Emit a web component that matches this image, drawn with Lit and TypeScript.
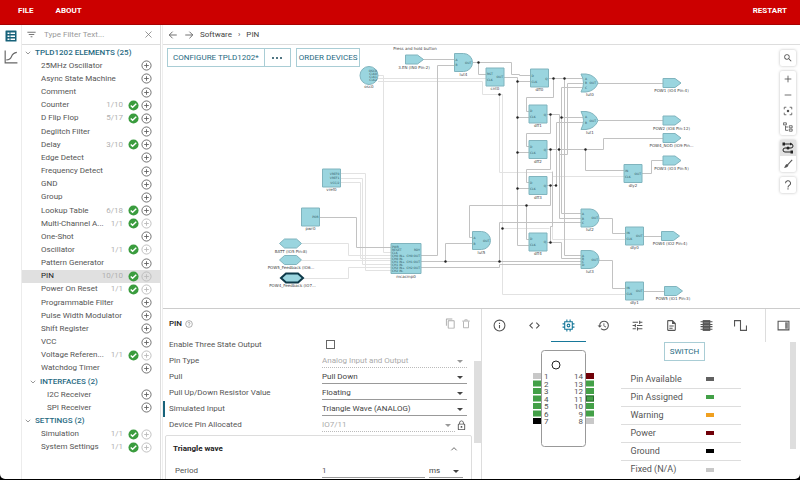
import { LitElement, html, svg, css, nothing } from "lit";
import { customElement, state } from "lit/decorators.js";
import { classMap } from "lit/directives/class-map.js";

const fill = (d: string) => svg`<path d=${d} fill="currentColor"/>`;
const line = (d: string, w = 2) =>
  svg`<path d=${d} fill="none" stroke="currentColor" stroke-width=${w}/>`;

const ICONS: Record<string, unknown> = {
  filter: fill("M10 18h4v-2h-4v2zM3 6v2h18V6H3zm3 7h12v-2H6v2z"),
  close: line("M4 4L20 20M20 4L4 20"),
  back: line("M21 12H3M11 4L3 12L11 20"),
  forward: line("M3 12H21M13 4L21 12L13 20"),
  down: line("M3 7L12 16L21 7", 3),
  up: line("M4 16L12 8L20 16", 2),
  help: svg`<circle cx="12" cy="12" r="10" fill="none" stroke="currentColor" stroke-width="2"/>${line("M9 10a3 3 0 1 1 4 3q-1 .5-1 2M12 16v2")}`,
  list: svg`<rect x="1" y="1" width="22" height="22" rx="1" fill="#17627a"/><path d="M5 5h4v3H5zM5 11h4v3H5zM5 17h4v3H5zM11 5h9v3h-9zM11 11h9v3h-9zM11 17h9v3h-9z" fill="#fff"/>`,
  chart: line("M2 1V22H23M4 17Q11 17 13 11T22 4"),
  add: svg`<circle cx="12" cy="12" r="10" fill="none" stroke="currentColor" stroke-width="2"/>${line("M12 7V17M7 12H17")}`,
  check: svg`<circle cx="12" cy="12" r="11" fill="#3a9c3e"/><path d="M6 12L10 16L18 8" fill="none" stroke="#fff" stroke-width="3"/>`,
  search: fill("M15.5 14h-.79l-.28-.27A6.47 6.47 0 0 0 16 9.5 6.5 6.5 0 1 0 9.5 16c1.61 0 3.09-.59 4.23-1.57l.27.28v.79l5 4.99L20.49 19l-4.99-5zm-6 0C7.01 14 5 11.99 5 9.5S7.01 5 9.5 5 14 7.01 14 9.5 11.99 14 9.5 14z"),
  plus: line("M4 12H20M12 4V20"),
  minus: line("M4 12H20"),
  fit: svg`${line("M3 8V3H8M16 3H21V8M21 16V21H16M8 21H3V16")}<circle cx="12" cy="12" r="3" fill="currentColor"/>`,
  tree: line("M1 2H8V7H1zM15 9H22V14H15zM15 17H22V22H15zM6 9V20H12M6 12H12"),
  route: svg`${line("M6 4H18a4 4 0 0 1 0 8H6a4 4 0 0 0 0 8H18", 2)}<path d="M16 1l5 3-5 3zM17 17h5v6h-5zM1 1h5v6H1z" fill="currentColor"/><circle cx="12" cy="12" r="3" fill="currentColor"/>`,
  brush: svg`${line("M22 2L11 14", 2.5)}<path d="M10 12l3 3c-1 5-6 6-11 6 4-2 2-8 8-9z" fill="currentColor"/>`,
  question: line("M6 8a6 6 0 1 1 9 5q-3 2-3 5M12 20v3", 2.5),
  copy: fill("M16 1H4c-1.1 0-2 .9-2 2v14h2V3h12V1zm3 4H8c-1.1 0-2 .9-2 2v14c0 1.1.9 2 2 2h11c1.1 0 2-.9 2-2V7c0-1.1-.9-2-2-2zm0 16H8V7h11v14z"),
  trash: line("M3 5H21M9 4V2H15V4M6 6V21H18V6"),
  lock: fill("M12 17c1.1 0 2-.9 2-2s-.9-2-2-2-2 .9-2 2 .9 2 2 2zm6-9h-1V6c0-2.76-2.24-5-5-5S7 3.24 7 6v2H6c-1.1 0-2 .9-2 2v10c0 1.1.9 2 2 2h12c1.1 0 2-.9 2-2V10c0-1.1-.9-2-2-2zM8.9 6c0-1.71 1.39-3.1 3.1-3.1s3.1 1.39 3.1 3.1v2H8.9V6zM18 20H6V10h12v10z"),
  info: svg`<circle cx="12" cy="12" r="10" fill="none" stroke="currentColor" stroke-width="2"/>${line("M12 7V9M12 11V17")}`,
  code: fill("M9.4 16.6L4.8 12l4.6-4.6L8 6l-6 6 6 6 1.4-1.4zm5.2 0l4.6-4.6-4.6-4.6L16 6l6 6-6 6-1.4-1.4z"),
  chip: svg`<circle cx="12" cy="12" r="2.5" fill="none" stroke="currentColor" stroke-width="2"/>${line("M5 5H19V19H5zM9 1V5M15 1V5M9 19V23M15 19V23M1 9H5M1 15H5M19 9H23M19 15H23")}`,
  history: fill("M13 3a9 9 0 0 0-9 9H1l3.89 3.89.07.14L9 12H6c0-3.87 3.13-7 7-7s7 3.13 7 7-3.13 7-7 7c-1.93 0-3.68-.79-4.94-2.06l-1.42 1.42A8.954 8.954 0 0 0 13 21a9 9 0 0 0 0-18zm-1 5v5l4.28 2.54.72-1.21-3.5-2.08V8H12z"),
  tune: fill("M3 17v2h6v-2H3zM3 5v2h10V5H3zm10 16v-2h8v-2h-8v-2h-2v6h2zM7 9v2H3v2h4v2h2V9H7zm14 4v-2H11v2h10zm-6-4h2V7h4V5h-4V3h-2v6z"),
  doc: fill("M8 16h6v2H8zm0-4h8v2H8zm6-10H6c-1.1 0-2 .9-2 2v16c0 1.1.89 2 1.99 2H18c1.1 0 2-.9 2-2V8l-6-6zm4 18H6V4h7v5h5v11z"),
  stack: svg`<path d="M5 2h14v20H5z" fill="currentColor"/>${line("M1 5H23M1 10H23M1 14H23M1 19H23")}<path d="M7 7H17M7 12H17M7 17H17" stroke="#fff" stroke-width="1" opacity=".5"/>`,
  wave: line("M1 14V3H12V21H23V12"),
  panel: svg`${line("M2 4H22V20H2z")}<path d="M15 6h5v12h-5z" fill="currentColor" opacity=".75"/>`,
};

const icon = (name: string, size = 12) =>
  html`<svg class="icon" width=${size} height=${size} viewBox="0 0 24 24" aria-hidden="true">${ICONS[name]}</svg>`;

interface Item {
  name: string;
  count?: string;
  full?: boolean;
  kind?: "head" | "subhead" | "sub";
}

const ITEMS: Item[] = [
  { name: "TPLD1202 ELEMENTS (25)", kind: "head" },
  { name: "25MHz Oscillator" },
  { name: "Async State Machine" },
  { name: "Comment" },
  { name: "Counter", count: "1/10" },
  { name: "D Flip Flop", count: "5/17" },
  { name: "Deglitch Filter" },
  { name: "Delay", count: "3/10" },
  { name: "Edge Detect" },
  { name: "Frequency Detect" },
  { name: "GND" },
  { name: "Group" },
  { name: "Lookup Table", count: "6/18" },
  { name: "Multi-Channel A...", count: "1/1", full: true },
  { name: "One-Shot" },
  { name: "Oscillator", count: "1/1", full: true },
  { name: "Pattern Generator" },
  { name: "PIN", count: "10/10", full: true },
  { name: "Power On Reset", count: "1/1", full: true },
  { name: "Programmable Filter" },
  { name: "Pulse Width Modulator" },
  { name: "Shift Register" },
  { name: "VCC" },
  { name: "Voltage Referen...", count: "1/1", full: true },
  { name: "Watchdog Timer" },
  { name: "INTERFACES (2)", kind: "subhead" },
  { name: "I2C Receiver", kind: "sub" },
  { name: "SPI Receiver", kind: "sub" },
  { name: "SETTINGS (2)", kind: "head" },
  { name: "Simulation", count: "1/1", full: true },
  { name: "System Settings", count: "1/1", full: true },
];

/* ---- Schematic data, in canvas units ---- */
interface Block {
  x: number; y: number; w?: number; h?: number;
  shape?: "and" | "or";
  label: string;
  ins?: [number, string][];
  outs?: [number, string][];
}

const BLOCKS: Block[] = [
  { x: 454.5, y: 53.5, shape: "and", label: "lut4", ins: [[59.5, "A"], [65, "B"]], outs: [[62.5, "OUT"]] },
  { x: 486, y: 68, label: "cnt0", ins: [[74, "RST"], [79.5, "CLK"]], outs: [[77, "OUT"]] },
  { x: 530.5, y: 69, label: "dff0", ins: [[75.5, "D"], [81.5, "CLK"]], outs: [[78.5, "Q"]] },
  { x: 529, y: 105, label: "dff1", ins: [[111, "D"], [117, "CLK"]], outs: [[114.5, "Q"]] },
  { x: 529, y: 140.5, label: "dff2", ins: [[146.5, "D"], [152.5, "CLK"]], outs: [[149.5, "Q"]] },
  { x: 529, y: 176.5, label: "dff3", ins: [[182.5, "D"], [188.5, "CLK"]], outs: [[185.5, "Q"]] },
  { x: 529, y: 233, label: "dff4", ins: [[239, "D"], [245, "CLK"]], outs: [[242, "Q"]] },
  { x: 581, y: 74, shape: "or", label: "lut0", ins: [[78.5, "A"], [83, "B"], [87.5, "C"]], outs: [[83, "OUT"]] },
  { x: 581, y: 111.5, shape: "or", label: "lut1", ins: [[117, "A"], [122.5, "B"]], outs: [[120.5, "OUT"]] },
  { x: 581, y: 209, shape: "and", label: "lut2", ins: [[213.5, "A"], [218.5, "B"], [222.5, "C"]], outs: [[218, "OUT"]] },
  { x: 581, y: 250.5, shape: "and", label: "lut3", ins: [[255.5, "A"], [258.5, "B"], [261.5, "C"], [264.5, "D"]], outs: [[260, "OUT"]] },
  { x: 472.5, y: 231.5, shape: "and", label: "lut5", ins: [[237.5, "A"], [243.5, "B"]], outs: [[240.5, "OUT"]] },
  { x: 624, y: 164.5, label: "dly2", ins: [[170.5, "IN"], [176.5, "CLK"]], outs: [[173.5, "OUT"]] },
  { x: 625.5, y: 227, label: "dly0", ins: [[233, "IN"], [239, "CLK"]], outs: [[236, "OUT"]] },
  { x: 625.5, y: 282, label: "dly1", ins: [[288, "IN"], [294, "CLK"]], outs: [[291, "OUT"]] },
  { x: 322.5, y: 169, label: "vref0", outs: [[173.5, "VREF0"], [178, "VREF1"], [182.5, "VCC/2"]] },
  { x: 301.5, y: 208, label: "pwr0", outs: [[217, "POR"]] },
  {
    x: 391, y: 243.5, w: 30, h: 30, label: "mcacmp0",
    ins: [[247, "PWR"], [249.5, "RESET"], [252.5, "CLK"], [255.5, "CH0 IN+"], [258.5, "CH0 IN-"], [261.5, "CH1 IN+"], [264.5, "CH1 IN-"], [267.5, "CH2 IN+"], [270.5, "CH2 IN-"]],
    outs: [[249.5, "RDY"], [255.5, "CH0 OUT"], [261.5, "CH1 OUT"], [267.5, "CH2 OUT"]],
  },
];

const OUT_PINS: [number, number, string][] = [
  [405.5, 59.5, "3.EN (IN0 Pin:2)"],
  [663, 83, "POW1 (IO4 Pin:4)"],
  [663, 120.5, "POW2 (IO8 Pin:12)"],
  [663, 138, "POW4_NOD (IO9 Pin..."],
  [663, 160.5, "POW3 (IO3 Pin:5)"],
  [661.5, 236, "POW4 (IO2 Pin:4)"],
  [664.5, 291, "POW5 (IO1 Pin:3)"],
];

const HEX_PINS: [number, number, string, boolean][] = [
  [279.5, 243.5, "BATT (IO5 Pin:8)", false],
  [279.5, 260, "POW5_Feedback (IO6...", false],
  [281, 278, "POW4_Feedback (IO7...", true],
];

const WIRES = [
  "M423 59.5H454.5", "M437.5 255.5V65.5H454.5M421 255.5H437.5",
  "M473 62.5H511.5V74.5H519.5V75.5H530.5", "M478.5 62.5V74.5H486",
  "M504 77.5H517.5V245.5H529", "M517.5 81.5H530.5M517.5 117.5H529M517.5 152.5H529M517.5 188.5H529",
  "M549 78.5H583M553.5 78.5V97.5H526.5V111.5H529",
  "M547 114.5H559.5V149.5M550.5 114.5V133.5H526.5V146.5H529",
  "M547 149.5H603.5V138.5H663M550.5 149.5V169.5H526.5V182.5H529",
  "M547 185.5H556.5V122.5H583M550.5 185.5V205.5H469.5V237.5H472.5", "M526.5 205.5V239.5H529",
  "M547 242.5H561.5V258.5H581M550.5 242.5V226.5H552.5V171.5",
  "M564.5 78.5V255.5H581", "M567.5 154.5V83.5H583M559 154.5H567.5", "M583 87.5H561.5V213.5H581M561.5 117.5H583",
  "M559.5 149.5V218.5H581", "M585.5 149.5V170.5H624",
  "M597 83.5H663M597 120.5H663", "M642 173.5H651.5V160.5H663",
  "M598 218.5H612.5V233.5H625.5M598 260.5H612.5V288.5H625.5", "M643 236.5H662M643 291.5H665",
  "M421 261.5H581M421 267.5H499.5V264.5H581M499.5 261.5V222.5H581", "M445.5 261.5V243.5H472.5",
  "M319.5 217.5H356.5V247.5H391",
];

const DASHED = [
  "M378 75.5H383.5V252.5H391", "M378 78.5H486", "M378 81.5H482.5V94.5H502.5V294.5H625.5",
  "M499.5 94.5V172.5H552.5V239.5H625.5", "M552.5 176.5H624", "M502.5 228.5H549.5",
  "M340.5 173.5H365.5V270.5H391M340.5 178.5H362.5V264.5H391M340.5 182.5H360.5V258.5H391",
  "M302 243.5H348.5V255.5H391M302 260.5H391M303 278.5H348.5V267.5H391",
];

const DOTS: [number, number][] = [
  [478.5, 62.5], [517.5, 81.5], [499.5, 94.5], [517.5, 117.5], [517.5, 152.5], [517.5, 188.5],
  [553.5, 78.5], [564.5, 78.5], [550.5, 114.5], [561.5, 117.5], [550.5, 149.5], [559, 149.5],
  [585.5, 149.5], [550.5, 185.5], [556, 185.5], [526.5, 205.5], [550.5, 242.5], [502.5, 228.5],
  [445.5, 261.5], [499.5, 261.5],
];

const blockShape = (b: Block) => {
  const { x, y, w = 18, h = 18 } = b;
  if (b.shape === "and") return `M${x} ${y}h9a9 9 0 0 1 0 18h-9z`;
  if (b.shape === "or") return `M${x} ${y}h5q9 1 12 9q-3 8-12 9h-5q5-9 0-18z`;
  return `M${x} ${y}h${w}v${h}h${-w}z`;
};

@customElement("schematic-canvas")
class SchematicCanvas extends LitElement {
  static styles = css`
    :host { display: block; width: 100%; height: 100%; }
    svg { display: block; width: 100%; height: 100%; font-family: "DejaVu Sans", sans-serif; }
    .wire { fill: none; stroke: #c2c2c2; }
    .dashed { fill: none; stroke: #e2e2e2; }
    .block { fill: #9ad5df; stroke: #80b4be; }
    .picked { stroke: #0e3a4a; stroke-width: 2; }
    .dot { fill: #222; }
    .label { font-size: 4px; text-anchor: middle; fill: #444; }
    .port { font-size: 3px; fill: #2d5560; }
    .end { text-anchor: end; }
  `;

  render() {
    return html`<svg viewBox="163 45 637 263" preserveAspectRatio="xMinYMin meet" role="img" aria-label="Schematic">
      ${DASHED.map((d) => svg`<path class="dashed" d=${d}/>`)}
      ${WIRES.map((d) => svg`<path class="wire" d=${d}/>`)}
      <circle class="block" cx="369" cy="75.5" r="9"/>
      ${["OSC0", "CLK0", "CLK1", "CLK2"].map((t, i) => svg`<text class="port end" x="377" y=${72 + i * 3}>${t}</text>`)}
      <text class="label" x="369" y="88">osc0</text>
      <text class="label" x="415" y="50">Press and hold button</text>
      ${BLOCKS.map((b) => svg`
        <path class="block" d=${blockShape(b)}/>
        ${(b.ins ?? []).map(([y, t]) => svg`<text class="port" x=${b.x + (b.shape === "or" ? 4 : 1)} y=${y + 1}>${t}</text>`)}
        ${(b.outs ?? []).map(([y, t]) => svg`<text class="port end" x=${b.x + (b.w ?? 18) - (b.shape === "or" ? 3 : 1)} y=${y + 1}>${t}</text>`)}
        <text class="label" x=${b.x + (b.w ?? 18) / 2} y=${b.y + (b.h ?? 18) + 4}>${b.label}</text>`)}
      ${OUT_PINS.map(([x, y, t]) => svg`
        <path class="block" d="M${x} ${y - 4.5}h12l6 4.5l-6 4.5h-12z"/>
        <text class="label" x=${x + 8.5} y=${y + 9}>${t}</text>`)}
      ${HEX_PINS.map(([x, y, t, on]) => svg`
        <path class=${on ? "block picked" : "block"} d="M${x} ${y}l5-4.5h12l5 4.5l-5 4.5h-12z"/>
        <text class="label" x=${x + 11.5} y=${y + 9}>${t}</text>`)}
      ${DOTS.map(([x, y]) => svg`<circle class="dot" cx=${x} cy=${y} r="1.2"/>`)}
    </svg>`;
  }
}

const LEGEND: [string, string][] = [
  ["Pin Available", "#616161"],
  ["Pin Assigned", "#43a047"],
  ["Warning", "#f0a020"],
  ["Power", "#700008"],
  ["Ground", "#000000"],
  ["Fixed (N/A)", "#c8c8c8"],
];

const LEFT_PINS = ["#c8c8c8", "#43a047", "#43a047", "#43a047", "#43a047", "#43a047", "#000"];
const RIGHT_PINS = ["#700008", "#43a047", "#43a047", "#43a047", "#43a047", "#43a047", "#c8c8c8"];
const TABS = ["info", "code", "chip", "history", "tune", "doc", "stack", "wave"];

@customElement("app-root")
class AppRoot extends LitElement {
  @state() private selected = "PIN";
  @state() private tab = "chip";

  static styles = css`
    :host {
      display: flex; flex-direction: column; height: 100vh; box-sizing: border-box;
      padding-bottom: 1px; background: #000; color: #555; overflow: hidden;
      font: 8px/12px Roboto, sans-serif;
    }
    * { box-sizing: border-box; }
    button, input, select { font: inherit; color: inherit; background: none; border: 0; padding: 0; margin: 0; border-radius: 0; }
    button { display: flex; align-items: center; justify-content: center; cursor: pointer; }
    .icon { display: block; flex: none; }

    .top { flex: none; display: flex; gap: 22px; align-items: center; height: 25px; padding: 0 13px 3px 18px; background: #cc0000; border-bottom: 1px solid #a80000; color: #fff; }
    .top button { font-weight: 700; }
    .top .restart { margin-left: auto; }

    .body { flex: 1; min-height: 0; display: flex; background: #fff; border-radius: 0 0 5px 5px; overflow: hidden; }
    .rail { flex: none; width: 22px; display: flex; flex-direction: column; align-items: center; gap: 8px; padding-top: 5px; border-right: 1px solid #ececec; color: #666; }
    .side { flex: none; width: 139px; display: flex; flex-direction: column; padding-bottom: 25px; border-right: 1px solid #ddd; }
    .filter { flex: none; display: flex; align-items: center; gap: 7px; height: 20px; padding: 0 7px 0 4px; border-bottom: 1px solid #ddd; margin-bottom: 1px; color: #777; }
    .filter input { flex: 1; min-width: 0; outline: 0; }
    .filter input::placeholder { color: #999; opacity: 1; }
    .tree { flex: 1; display: grid; grid-auto-rows: minmax(13px, 1fr); margin: 0; padding: 0; list-style: none; }
    .item { display: flex; align-items: center; padding: 0 8px 0 19px; }
    .item.sub { padding-left: 25px; }
    .item.head { padding-left: 3px; }
    .item.subhead { padding-left: 8px; }
    .item.on { background: #e0e0e0; }
    .item.on .name { color: #222; }
    .name { white-space: nowrap; text-align: left; }
    .heading { gap: 4px; font-weight: 500; color: #1f6a82; }
    .heading .icon { color: #777; }
    .count { margin-left: auto; padding-right: 5px; color: #b0b0b0; }
    .count + .icon { margin-right: 2px; }
    .add { margin-left: auto; color: #666; }
    .icon + .add { margin-left: 0; }
    .add:disabled { color: #bbb; }

    .main { flex: 1; min-width: 0; display: flex; flex-direction: column; margin-left: 1px; border-left: 1px solid #eee; }
    .crumbs { flex: none; display: flex; align-items: center; gap: 6px; height: 20px; padding-left: 5px; border-bottom: 1px solid #ddd; color: #555; }
    .crumbs .text { display: flex; gap: 6px; margin: 0; color: #444; }
    .canvas { flex: 264; min-height: 0; position: relative; border-bottom: 1px solid #ccc; }
    .actions { position: absolute; top: 3px; left: 4px; display: flex; gap: 5px; }
    .actions .group { display: flex; border: 1px solid #a9cdd5; }
    .actions button { height: 17px; color: #1f6a82; }
    .configure { padding: 0 5px; }
    .more { width: 26px; border-left: 1px solid #a9cdd5 !important; }
    .dots { display: flex; gap: 2px; }
    .dots i { width: 2px; height: 2px; border-radius: 1px; background: #17495a; }
    .order { padding: 0 2px; }
    .tools { position: absolute; top: 5px; right: 4px; display: flex; flex-direction: column; gap: 5px; width: 16px; }
    .tools .group { display: flex; flex-direction: column; border-radius: 2px; background: #fff; box-shadow: 0 0 3px #bbb; }
    .tools button { height: 16px; color: #555; }
    .tools button.on { background: #e2e2e2; color: #222; }

    .lower { flex: 170; min-height: 0; display: grid; grid-template-columns: 1fr 1fr; }
    .props { display: flex; min-width: 0; min-height: 0; overflow: hidden; border-right: 1px solid #ddd; }
    .form { flex: 1; min-width: 0; padding-left: 2px; }
    .title { display: flex; align-items: center; gap: 3px; height: 27px; padding: 2px 1px 0 4px; color: #222; font-weight: 500; }
    .title .icon { color: #888; }
    .title button .icon { color: #aaa; }
    .title .push { margin-left: auto; margin-right: 2px; }
    .title h2 { margin: 0; font: inherit; }
    .row { display: grid; grid-template-columns: 153px 1fr; align-items: center; height: 16px; padding: 0 5px 0 4px; }
    .row.first { height: 17px; }
    .row.mark { border-left: 2px solid #17627a; padding-left: 4px; margin-left: -2px; }
    .tick { appearance: none; width: 9px; height: 9px; margin-left: 4px; border: 1px solid #666; }
    .field { position: relative; display: flex; align-items: center; min-width: 0; }
    .field select { appearance: none; flex: 1; min-width: 0; height: 14px; border-bottom: 1px solid #999; color: #444; outline: 0; opacity: 1; }
    .field select:disabled { color: #aaa; border-bottom-style: dotted; border-bottom-color: #bbb; }
    .field::after { content: ""; position: absolute; right: 4px; top: 6px; border: 3px solid transparent; border-top-color: #444; border-bottom: 0; pointer-events: none; }
    .field.off::after { border-top-color: #999; }
    .field.locked { padding-right: 12px; }
    .field.locked::after { right: 16px; }
    .field.locked .icon { position: absolute; right: 0; }
    .card { margin: 2px 0 0; border: 1px solid #ddd; border-radius: 2px 2px 0 0; height: 60px; }
    .card h3 { display: flex; align-items: center; justify-content: space-between; height: 26px; margin: 0; padding: 0 13px 0 7px; font-size: 8px; color: #222; }
    .period { display: grid; grid-template-columns: 143px 103px 34px; align-items: center; column-gap: 4px; height: 18px; padding-left: 9px; }
    .period input { width: 100%; height: 14px; border-bottom: 1px solid #999; outline: 0; }
    .track { flex: none; width: 7px; padding-top: 52px; margin-left: 2px; }
    .thumb { height: 82px; background: #dedede; }

    .info { display: flex; flex-direction: column; min-width: 0; min-height: 0; overflow: hidden; margin-left: 1px; }
    .tabs { flex: none; display: flex; height: 33px; }
    .tabs .tab { flex: 1; color: #555; border-bottom: 1px solid transparent; }
    .tabs .tab.on { color: #17789a; border-bottom-color: #17789a; }
    .tabs .dock { width: 35px; margin-left: 7px; border-left: 1px solid #ddd; color: #555; }
    .detail { flex: 1; min-height: 0; display: flex; }
    .chip { flex: none; display: block; width: 64px; height: 110px; margin-left: 49px; font: 8px Roboto, sans-serif; }
    .num { fill: #555; }
    .num.end { text-anchor: end; }
    .legend { width: 120px; margin-left: 25px; display: flex; flex-direction: column; align-items: center; }
    .switch { flex: none; width: 41px; height: 19px; border: 1px solid #a9cdd5; color: #1f6a82; margin-left: 8px; }
    table { width: 100%; margin-top: 9px; border-collapse: collapse; font-size: 9px; line-height: 17px; }
    th { padding: 0 0 0 10px; text-align: left; font-weight: 400; }
    td { padding: 0 27px 0 0; }
    tr + tr { border-top: 1px solid #ddd; }
    tr { height: 18px; }
    .swatch { display: block; width: 8px; height: 4px; margin-left: auto; }
    .scroll { width: 6px; height: 107px; margin: 0 4px 0 auto; background: #dedede; }
  `;

  private renderItem(i: Item) {
    const heading = i.kind === "head" || i.kind === "subhead";
    if (heading)
      return html`<li class="item ${i.kind}"><button class="name heading">${icon("down", 6)}${i.name}</button></li>`;
    return html`<li class=${classMap({ item: true, sub: i.kind === "sub", on: i.name === this.selected })}>
      <button class="name" @click=${() => (this.selected = i.name)}>${i.name}</button>
      ${i.count ? html`<span class="count">${i.count}</span>${icon("check", 11)}` : nothing}
      <button class="add" aria-label="Add ${i.name}" ?disabled=${!!i.full}>${icon("add", 11)}</button>
    </li>`;
  }

  private renderSelect(id: string, label: string, value: string, off = false, mark = false, locked = false) {
    return html`<div class=${classMap({ row: true, mark })}>
      <label for=${id}>${label}</label>
      <div class=${classMap({ field: true, off, locked })}>
        <select id=${id} ?disabled=${off}><option>${value}</option></select>
        ${locked ? icon("lock", 11) : nothing}
      </div>
    </div>`;
  }

  private tool(name: string, label: string, on = false) {
    return html`<button class=${classMap({ on })} aria-label=${label}>${icon(name, name === "route" ? 12 : 10)}</button>`;
  }

  private renderChip() {
    const pinY = (n: number) => 31 + n * 7.5;
    return html`<svg class="chip" viewBox="0 0 64 110" role="img" aria-label="Package pinout">
      <rect x="9.5" y="8.5" width="44" height="96" rx="3" fill="#fff" stroke="#999"/>
      <circle cx="24" cy="23" r="4" fill="none" stroke="#222"/>
      ${LEFT_PINS.map((c, n) => svg`<rect x="1" y=${pinY(n)} width="8" height="6" fill=${c}/>
        <text class="num" x="12" y=${pinY(n) + 6}>${n + 1}</text>`)}
      ${RIGHT_PINS.map((c, n) => svg`<rect x="54" y=${pinY(n)} width="8" height="6" fill=${c}/>
        <text class="num end" x="51" y=${pinY(n) + 6}>${14 - n}</text>`)}
      <rect x="54.5" y="54" width="7" height="5" fill="none" stroke="#2a6b2d"/>
    </svg>`;
  }

  render() {
    return html`
      <header class="top">
        <button>FILE</button><button>ABOUT</button><button class="restart">RESTART</button>
      </header>
      <div class="body">
        <nav class="rail">
          <button aria-label="Elements">${icon("list", 12)}</button>
          <button aria-label="Charts">${icon("chart", 14)}</button>
        </nav>
        <aside class="side">
          <div class="filter">
            ${icon("filter", 11)}
            <input aria-label="Filter" placeholder="Type Filter Text..." />
            <button aria-label="Clear">${icon("close", 9)}</button>
          </div>
          <ul class="tree">${ITEMS.map((i) => this.renderItem(i))}</ul>
        </aside>
        <main class="main">
          <nav class="crumbs">
            <button aria-label="Back">${icon("back", 10)}</button>
            <button aria-label="Forward">${icon("forward", 10)}</button>
            <p class="text"><span>Software</span><span>›</span><span>PIN</span></p>
          </nav>
          <section class="canvas">
            <schematic-canvas></schematic-canvas>
            <div class="actions">
              <div class="group">
                <button class="configure">CONFIGURE TPLD1202*</button>
                <button class="more" aria-label="More"><span class="dots"><i></i><i></i><i></i></span></button>
              </div>
              <div class="group"><button class="order">ORDER DEVICES</button></div>
            </div>
            <div class="tools">
              <div class="group">${this.tool("search", "Search")}</div>
              <div class="group">
                ${this.tool("plus", "Zoom in")}${this.tool("minus", "Zoom out")}
                ${this.tool("fit", "Fit")}${this.tool("tree", "Arrange")}
              </div>
              <div class="group">${this.tool("route", "Route", true)}${this.tool("brush", "Style")}</div>
              <div class="group">${this.tool("question", "Help")}</div>
            </div>
          </section>
          <div class="lower">
            <section class="props">
              <div class="form">
                <div class="title">
                  <h2>PIN</h2>${icon("help", 8)}
                  <button class="push" aria-label="Copy">${icon("copy", 11)}</button>
                  <button aria-label="Delete">${icon("trash", 10)}</button>
                </div>
                <div class="row first">
                  <label for="tri">Enable Three State Output</label>
                  <input id="tri" class="tick" type="checkbox" />
                </div>
                ${this.renderSelect("type", "Pin Type", "Analog Input and Output", true)}
                ${this.renderSelect("pull", "Pull", "Pull Down")}
                ${this.renderSelect("res", "Pull Up/Down Resistor Value", "Floating")}
                ${this.renderSelect("sim", "Simulated Input", "Triangle Wave (ANALOG)", false, true)}
                ${this.renderSelect("dev", "Device Pin Allocated", "IO7/11", true, false, true)}
                <div class="card">
                  <h3>Triangle wave ${icon("up", 8)}</h3>
                  <div class="period">
                    <label for="period">Period</label>
                    <input id="period" value="1" />
                    <div class="field"><select aria-label="Unit"><option>ms</option></select></div>
                  </div>
                </div>
              </div>
              <div class="track"><div class="thumb"></div></div>
            </section>
            <section class="info">
              <div class="tabs">
                ${TABS.map((t) => html`<button class=${classMap({ tab: true, on: t === this.tab })} aria-label=${t}
                  @click=${() => (this.tab = t)}>${icon(t, 13)}</button>`)}
                <button class="dock" aria-label="Dock panel">${icon("panel", 13)}</button>
              </div>
              <div class="detail">
                ${this.renderChip()}
                <div class="legend">
                  <button class="switch">SWITCH</button>
                  <table>
                    ${LEGEND.map(([t, c]) => html`<tr><th scope="row">${t}</th><td><span class="swatch" style="background:${c}"></span></td></tr>`)}
                  </table>
                </div>
                <div class="scroll"></div>
              </div>
            </section>
          </div>
        </main>
      </div>
    `;
  }
}
